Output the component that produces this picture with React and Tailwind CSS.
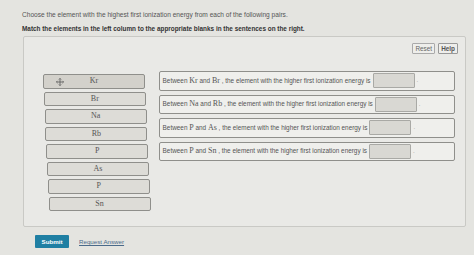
const items = ["Kr", "Br", "Na", "Rb", "P", "As", "P", "Sn"];

const sentences = [
  ["Kr", "Br"],
  ["Na", "Rb"],
  ["P", "As"],
  ["P", "Sn"],
];

const serif = { fontFamily: '"Liberation Serif", "Times New Roman", serif' };

function MoveIcon() {
  return (
    <svg width="8" height="8" viewBox="0 0 10 10" className="text-[#555]">
      <path d="M5 0.5 L5 9.5 M0.5 5 L9.5 5" stroke="currentColor" strokeWidth="1" fill="none" />
      <path d="M3.5 2 L5 0.5 L6.5 2 M3.5 8 L5 9.5 L6.5 8 M2 3.5 L0.5 5 L2 6.5 M8 3.5 L9.5 5 L8 6.5" stroke="currentColor" strokeWidth="0.8" fill="none" />
    </svg>
  );
}

export default function App() {
  return (
    <div
      className="w-[474px] h-[255px] overflow-hidden bg-[#e4e4e0] text-[#444] relative"
      style={{ fontFamily: '"Liberation Sans", Arial, sans-serif' }}
    >
      <div className="pl-[22px] pt-[11px]">
        <p className="text-[6.6px] leading-[8px] text-[#555]">
          Choose the element with the highest first ionization energy from each of the following pairs.
        </p>
        <p className="text-[6.4px] leading-[8px] font-bold text-[#333] mt-[6px]">
          Match the elements in the left column to the appropriate blanks in the sentences on the right.
        </p>
      </div>

      <div className="ml-[23px] mt-[3px] w-[443px] h-[191px] border border-[#c9c9c5] bg-[#e9e9e6] rounded-[2px] pt-[6px] pr-[7px]">
        <div className="flex justify-end gap-[3px]">
          <div className="h-[11px] px-[2px] border border-[#aaa] rounded-[1px] bg-[#eeeeeb] text-[6.4px] leading-[9px] text-[#666]">
            Reset
          </div>
          <div className="h-[11px] px-[2px] border border-[#999] rounded-[1px] bg-[#eeeeeb] text-[6.4px] leading-[9px] font-bold text-[#555]">
            Help
          </div>
        </div>

        <div className="flex mt-[15px]">
          <div className="flex flex-col gap-[3px] ml-[19px] mt-[5px]">
            {items.map((el, i) => (
              <div
                key={i}
                className={`w-[102px] h-[14.5px] border border-[#8f8f8b] rounded-[2px] flex items-center justify-center relative ${
                  i === 0 ? "bg-[#d3d1cb]" : "bg-[#dddcd7]"
                }`}
                style={{ marginLeft: i * 0.8 }}
              >
                {i === 0 && (
                  <span className="absolute left-[12px] top-[2.5px]">
                    <MoveIcon />
                  </span>
                )}
                <span className="text-[8px] text-[#555]" style={serif}>
                  {el}
                </span>
              </div>
            ))}
          </div>

          <div className="flex flex-col gap-[4px] ml-[8px] mt-[2px]">
            {sentences.map(([a, b], i) => (
              <div
                key={i}
                className="w-[296px] h-[19.5px] border border-[#8f8f8b] rounded-[2px] bg-[#efefec] flex items-center pl-[3px]"
              >
                <span className="text-[6.4px] text-[#555] whitespace-nowrap">
                  Between{" "}
                  <span className="text-[8px]" style={serif}>
                    {a}
                  </span>{" "}
                  and{" "}
                  <span className="text-[8px]" style={serif}>
                    {b}
                  </span>{" "}
                  , the element with the higher first ionization energy is
                </span>
                <div className="w-[42px] h-[15px] ml-[2px] border border-[#a9a9a5] bg-[#d9d8d3] rounded-[1px]" />
                <span className="text-[6px] text-[#888] ml-[2px]">.</span>
              </div>
            ))}
          </div>
        </div>
      </div>

      <div className="flex items-center mt-[8px] ml-[35px]">
        <div className="w-[34px] h-[13px] bg-[#1f7fa3] rounded-[1px] text-white text-[6.2px] font-bold flex items-center justify-center">
          Submit
        </div>
        <span className="ml-[10px] text-[6.2px] text-[#4a6a8a] underline">Request Answer</span>
      </div>
    </div>
  );
}
